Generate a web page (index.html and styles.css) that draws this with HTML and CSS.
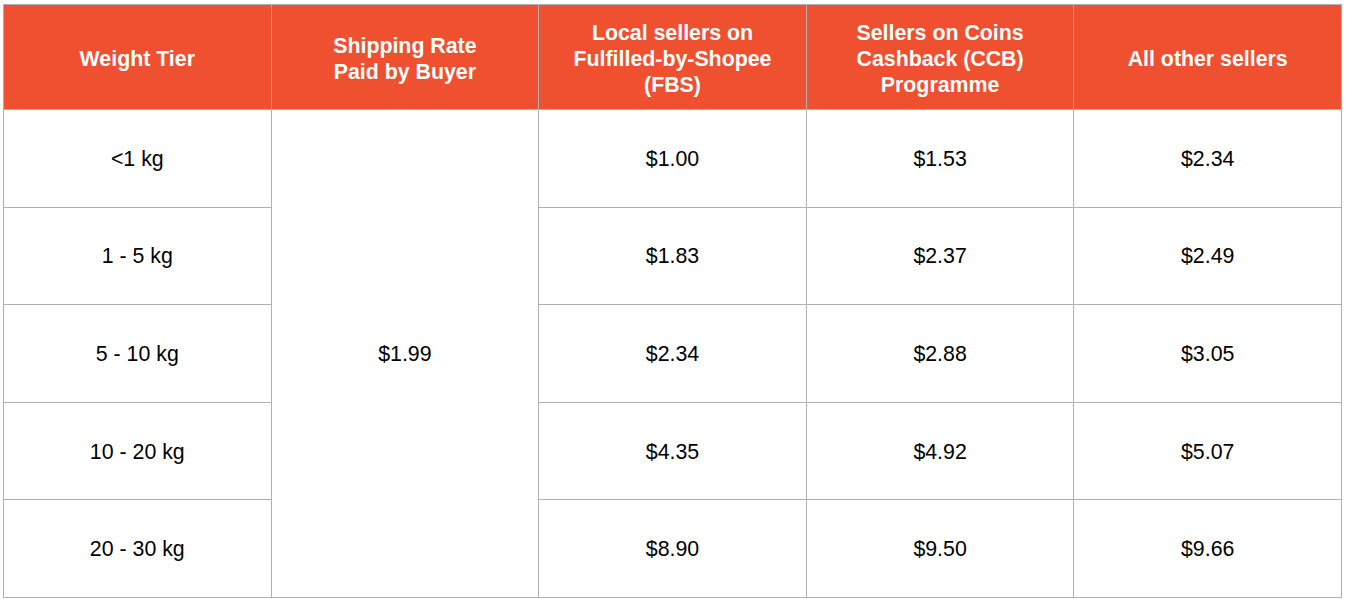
FILE: index.html
```html
<!DOCTYPE html>
<html>
<head>
<meta charset="utf-8">
<link rel="stylesheet" href="styles.css">
</head>
<body>
<table class="rates">
  <colgroup>
    <col class="col"><col class="col"><col class="col"><col class="col"><col class="col">
  </colgroup>
  <thead>
    <tr class="head-row">
      <th>Weight Tier</th>
      <th>Shipping Rate<br>Paid by Buyer</th>
      <th>Local sellers on<br>Fulfilled-by-Shopee<br>(FBS)</th>
      <th>Sellers on Coins<br>Cashback (CCB)<br>Programme</th>
      <th>All other sellers</th>
    </tr>
  </thead>
  <tbody>
    <tr class="row"><td>&lt;1 kg</td><td rowspan="5">$1.99</td><td>$1.00</td><td>$1.53</td><td>$2.34</td></tr>
    <tr class="row"><td>1 - 5 kg</td><td>$1.83</td><td>$2.37</td><td>$2.49</td></tr>
    <tr class="row"><td>5 - 10 kg</td><td>$2.34</td><td>$2.88</td><td>$3.05</td></tr>
    <tr class="row"><td>10 - 20 kg</td><td>$4.35</td><td>$4.92</td><td>$5.07</td></tr>
    <tr class="row"><td>20 - 30 kg</td><td>$8.90</td><td>$9.50</td><td>$9.66</td></tr>
  </tbody>
</table>
</body>
</html>
```

FILE: styles.css
```css
html, body {
  margin: 0;
  padding: 0;
  background: #ffffff;
}
body {
  padding: 4px 0 0 3px;
  font-family: "Liberation Sans", Arial, sans-serif;
}
.rates {
  border-collapse: collapse;
  table-layout: fixed;
  width: 1339px;
  border: 1px solid #b0b0b0;
}
.col {
  width: 20%;
}
.rates th,
.rates td {
  border: 1px solid #b0b0b0;
  text-align: center;
  vertical-align: middle;
}
.rates th {
  background: #ef5030;
  color: #ffffff;
  font-weight: bold;
  font-size: 21.33px;
  line-height: 26px;
  padding: 3px 4px 0;
}
.rates td {
  color: #000000;
  font-size: 21.33px;
  padding: 2px 4px 0;
}
.head-row {
  height: 105px;
}
.row {
  height: 97.6px;
}
```
